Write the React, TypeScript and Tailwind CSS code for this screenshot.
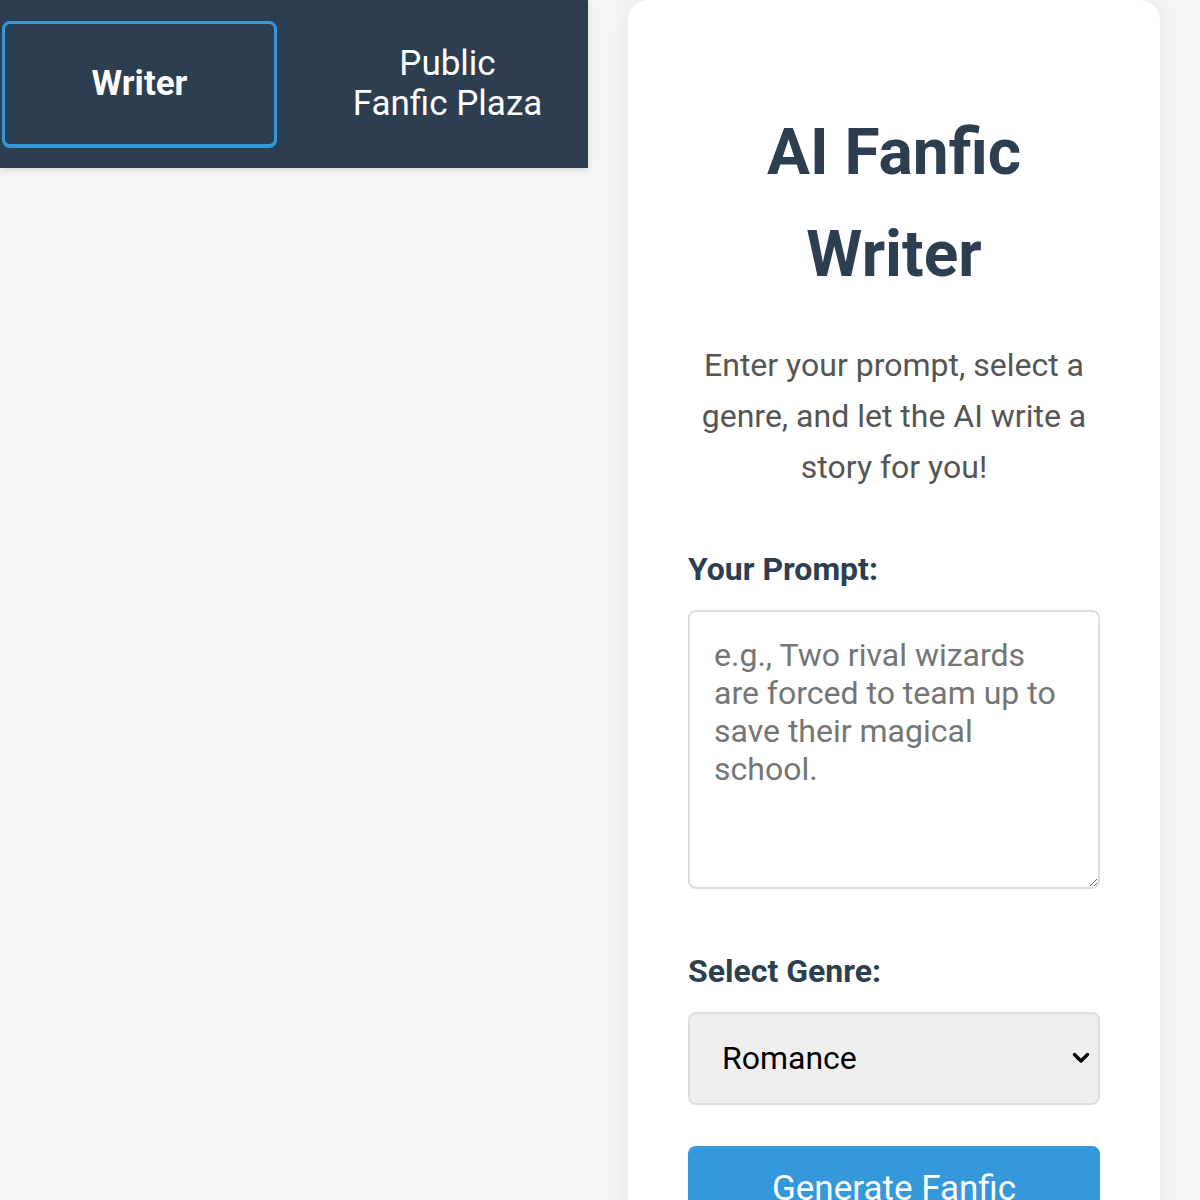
import React from "react";

export default function App() {
  return (
    <div
      className="min-h-[1200px] w-[1200px] overflow-hidden bg-[#f4f4f4]"
      style={{ fontFamily: "Roboto, 'Noto Sans', sans-serif" }}
    >
      <div className="flex items-start gap-[40px]">
        <nav className="flex h-[168px] w-[588px] shrink-0 items-center bg-[#2c3e50] px-[2px] shadow-[0_2px_6px_rgba(0,0,0,0.12)]">
          <button className="flex h-[127px] w-[275px] items-center justify-center rounded-[8px] border-[3px] border-b-[4px] border-[#3498db] bg-[#2c3e50] text-[35px] font-bold leading-[40px] text-white">
            Writer
          </button>
          <button className="ml-[33px] flex h-[127px] w-[275px] items-center justify-center text-center text-[35px] leading-[40px] font-normal text-white">
            Public
            <br />
            Fanfic Plaza
          </button>
        </nav>

        <main className="flex w-[532px] shrink-0 flex-col rounded-[20px] bg-white px-[60px] pt-[102px] pb-[60px] shadow-[0_0_20px_rgba(0,0,0,0.06)]">
          <h1 className="text-center text-[64px] font-bold leading-[1.6] text-[#2c3e50]">
            AI Fanfic
            <br />
            Writer
          </h1>
          <p className="mt-[33px] text-center text-[32px] leading-[1.6] text-[#555]">
            Enter your prompt, select a genre, and let the AI write a story for you!
          </p>

          <label className="mt-[51px] block text-[32px] font-bold leading-[1.6] text-[#2c3e50]">
            Your Prompt:
          </label>
          <textarea
            className="mt-[14px] h-[279px] w-full resize-y rounded-[8px] border-2 border-[#ddd] px-[24px] pt-[24px] pb-[20px] text-[32px] leading-[38px] text-[#333] placeholder:text-[#757575] outline-none"
            placeholder="e.g., Two rival wizards are forced to team up to save their magical school."
          />

          <label className="mt-[57px] block text-[32px] font-bold leading-[1.6] text-[#2c3e50]">
            Select Genre:
          </label>
          <div className="relative mt-[15px]">
            <select
              className="h-[93px] w-full appearance-none rounded-[8px] border-2 border-[#ddd] bg-[#efefef] pl-[32px] text-[32px] text-black outline-none"
              defaultValue="Romance"
            >
              <option>Romance</option>
              <option>Fantasy</option>
              <option>Sci-Fi</option>
              <option>Mystery</option>
              <option>Adventure</option>
            </select>
            <svg
              className="pointer-events-none absolute right-[10px] top-[39px]"
              width="18"
              height="14"
              viewBox="0 0 18 14"
              fill="none"
            >
              <path d="M2.5 3.5 L9 10 L15.5 3.5" stroke="#000" strokeWidth="3.4" strokeLinecap="round" strokeLinejoin="round" />
            </svg>
          </div>

          <button className="mt-[41px] w-full rounded-[8px] bg-[#3498db] pt-[23px] pb-[24px] text-[35px] leading-[40px] text-white">
            Generate Fanfic
          </button>
        </main>
      </div>
    </div>
  );
}
